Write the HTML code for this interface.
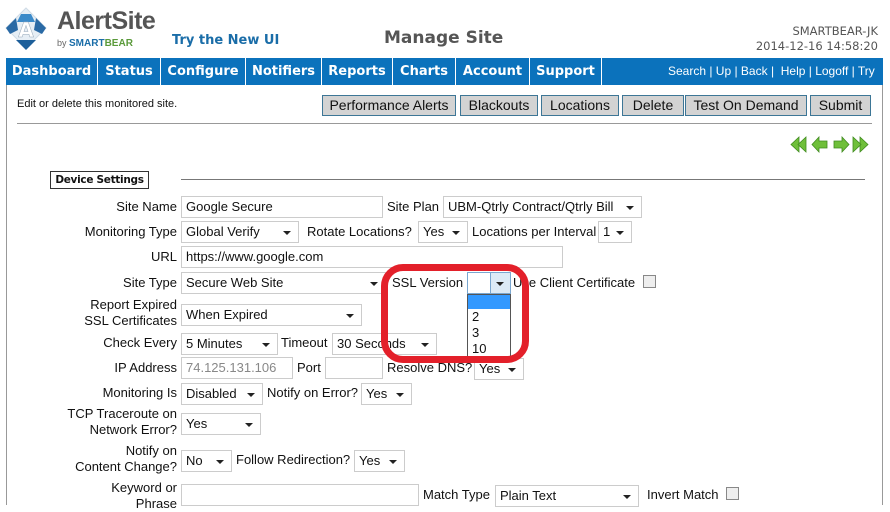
<!DOCTYPE html>
<html><head><meta charset="utf-8"><style>
*{margin:0;padding:0;box-sizing:border-box}
body{width:890px;height:499px;overflow:hidden;background:#fff;font-family:"Liberation Sans",Arial,sans-serif;position:relative;color:#111}
.a{position:absolute;white-space:nowrap}
.t{font-size:13px}
.r{text-align:right}
.in{position:absolute;border:1px solid #ccc;background:#fff;font-size:13px;padding:2px 4px;line-height:16px;height:22px;white-space:nowrap}
.sel{position:absolute;border:1px solid #ccc;background:#fff;font-size:13px;padding:1px 4px;line-height:18px;height:22px;white-space:nowrap}
.sel:after{content:"";position:absolute;right:7px;top:9px;border-left:4px solid transparent;border-right:4px solid transparent;border-top:4px solid #222}
.nav{position:absolute;top:58px;height:27px;background:#0b72bc;color:#fff;font-family:"DejaVu Sans",Verdana,sans-serif;font-weight:bold;font-size:13px;line-height:27px;text-align:center;border-right:1px solid #fff}
.btn{position:absolute;top:95px;height:21px;background:#d3d3d3;border:1px solid #3d7696;font-size:14px;line-height:19px;text-align:center;color:#111}
</style></head><body>
<svg class="a" style="left:4px;top:6px" width="44" height="46" viewBox="0 0 44 46">
<path d="M22 2 L42 22 L22 42 L2 22 Z" fill="#e6eef5"/>
<path d="M22 2 L42 22 L22 42 L2 22 Z" fill="none" stroke="#cfdbe6" stroke-width="1"/>
<path d="M2 22 L12 12 L14 24 L6 28 Z" fill="#2a6aa5"/>
<path d="M32 12 L42 22 L38 28 L30 24 Z" fill="#2a6aa5"/>
<path d="M12 34 L22 44 L32 34 Z" fill="#1d5f9a"/>
<path d="M17 8 L27 8 L31 16 L13 16 Z" fill="#3b8ac9"/>
<text x="22" y="31" font-family="DejaVu Sans" font-weight="bold" font-size="20" fill="#fff" text-anchor="middle" stroke="#9ab" stroke-width="0.5">A</text>
</svg>
<div class="a" style="left:57px;top:6px;font-family:'Liberation Sans',Arial,sans-serif;font-weight:bold;font-size:25px;color:#555;letter-spacing:-0.5px;line-height:30px">AlertSite</div>
<div class="a" style="left:57px;top:38px;font-size:9px;color:#666">by <b style="color:#1a6da8;font-size:10px">SMART</b><b style="color:#5a9a3a;font-size:10px">BEAR</b></div>
<div class="a" style="left:172px;top:33px;font-family:'DejaVu Sans',Verdana,sans-serif;font-weight:bold;font-size:13px;color:#1a6da8">Try the New UI</div>
<div class="a" style="left:384px;top:28px;font-family:'DejaVu Sans',Verdana,sans-serif;font-weight:bold;font-size:17px;color:#555">Manage Site</div>
<div class="a r" style="right:12px;top:24px;font-family:'DejaVu Sans',Verdana,sans-serif;font-size:11.5px;color:#555">SMARTBEAR-JK</div>
<div class="a r" style="right:12px;top:39px;font-family:'DejaVu Sans',Verdana,sans-serif;font-size:11.5px;color:#555">2014-12-16 14:58:20</div>
<div class="a" style="left:6px;top:58px;width:877px;height:27px;background:#0b72bc"></div>
<div class="nav" style="left:6px;width:92px">Dashboard</div>
<div class="nav" style="left:98px;width:63px">Status</div>
<div class="nav" style="left:161px;width:85px">Configure</div>
<div class="nav" style="left:246px;width:76px">Notifiers</div>
<div class="nav" style="left:322px;width:71px">Reports</div>
<div class="nav" style="left:393px;width:63px">Charts</div>
<div class="nav" style="left:456px;width:74px">Account</div>
<div class="nav" style="left:530px;width:72px">Support</div>
<div class="a" style="left:668px;top:64px;font-size:12px;color:#fff">Search | Up | Back |&nbsp; Help | Logoff | Try</div>
<div class="a" style="left:6px;top:85px;width:877px;height:420px;border-left:1px solid #999;border-right:1px solid #999"></div>
<div class="a" style="left:17px;top:98px;font-size:11px">Edit or delete this monitored site.</div>
<div class="btn" style="left:322px;width:134px">Performance Alerts</div>
<div class="btn" style="left:460px;width:78px">Blackouts</div>
<div class="btn" style="left:541px;width:78px">Locations</div>
<div class="btn" style="left:622px;width:62px">Delete</div>
<div class="btn" style="left:685px;width:122px">Test On Demand</div>
<div class="btn" style="left:810px;width:61px">Submit</div>
<div class="a" style="left:17px;top:123px;width:855px;height:1px;background:#999"></div>
<svg class="a" style="left:790px;top:136px" width="80" height="17" viewBox="0 0 80 17">
<g fill="#6fbf3a" stroke="#3f8a1e" stroke-width="0.8">
<path d="M1 8.5 L9 1 L9 16 Z"/><path d="M8 8.5 L16 1 L16 16 Z"/>
<path d="M22 8.5 L29 1 L29 5 L37 5 L37 12 L29 12 L29 16 Z"/>
<path d="M59 8.5 L52 1 L52 5 L44 5 L44 12 L52 12 L52 16 Z"/>
<path d="M78 8.5 L70 1 L70 16 Z"/><path d="M71 8.5 L63 1 L63 16 Z"/>
</g></svg>
<div class="a" style="left:50px;top:171px;width:99px;height:18px;border:1px solid #333;font-size:10.5px;font-weight:bold;line-height:16px;text-align:center;font-family:'DejaVu Sans',Verdana,sans-serif;letter-spacing:-0.3px">Device Settings</div>
<div class="a" style="left:181px;top:179px;width:684px;height:1px;background:#777"></div>

<div class="a t r" style="right:713px;top:199px">Site Name</div>
<div class="in" style="left:181px;top:196px;width:202px">Google Secure</div>
<div class="a t" style="left:387px;top:199px">Site Plan</div>
<div class="sel" style="left:443px;top:196px;width:199px;padding-right:20px">UBM-Qtrly Contract/Qtrly Bill</div>

<div class="a t r" style="right:713px;top:224px">Monitoring Type</div>
<div class="sel" style="left:181px;top:221px;width:118px">Global Verify</div>
<div class="a t" style="left:307px;top:224px">Rotate Locations?</div>
<div class="sel" style="left:418px;top:221px;width:50px">Yes</div>
<div class="a t" style="left:472px;top:224px">Locations per Interval</div>
<div class="sel" style="left:598px;top:221px;width:34px">1</div>

<div class="a t r" style="right:713px;top:249px">URL</div>
<div class="in" style="left:181px;top:246px;width:382px">https://www.google.com</div>

<div class="a t r" style="right:713px;top:275px">Site Type</div>
<div class="sel" style="left:181px;top:272px;width:205px">Secure Web Site</div>
<div class="a t" style="left:392px;top:275px">SSL Version</div>
<div class="a" style="left:467px;top:272px;width:44px;height:22px;border:1px solid #7aa7d0;background:#fff"></div>
<div class="a" style="left:490px;top:273px;width:20px;height:20px;background:#dceaf6;border-left:1px solid #7aa7d0"></div>
<div class="a" style="left:496px;top:282px;border-left:4px solid transparent;border-right:4px solid transparent;border-top:4px solid #222"></div>
<div class="a t" style="left:513px;top:275px">Use Client Certificate</div>
<div class="a" style="left:643px;top:275px;width:13px;height:13px;border:1px solid #888;background:#eee"></div>

<div class="a" style="left:467px;top:294px;width:44px;height:63px;border:1px solid #555;background:#fff;font-size:13px;line-height:16px">
<div style="height:14px;background:#3399ff"></div>
<div style="padding-left:4px">2</div><div style="padding-left:4px">3</div><div style="padding-left:4px">10</div></div>

<div class="a t r" style="right:713px;top:297px;line-height:16px">Report Expired<br>SSL Certificates</div>
<div class="sel" style="left:181px;top:304px;width:181px">When Expired</div>

<div class="a t r" style="right:713px;top:335px">Check Every</div>
<div class="sel" style="left:181px;top:333px;width:97px">5 Minutes</div>
<div class="a t" style="left:281px;top:335px">Timeout</div>
<div class="sel" style="left:332px;top:333px;width:105px">30 Seconds</div>

<div class="a t r" style="right:713px;top:360px">IP Address</div>
<div class="in" style="left:181px;top:357px;width:112px;color:#888">74.125.131.106</div>
<div class="a t" style="left:297px;top:360px">Port</div>
<div class="in" style="left:325px;top:357px;width:58px"></div>
<div class="a t" style="left:387px;top:360px">Resolve DNS?</div>
<div class="sel" style="left:474px;top:358px;width:50px">Yes</div>

<div class="a t r" style="right:713px;top:385px">Monitoring Is</div>
<div class="sel" style="left:181px;top:383px;width:82px">Disabled</div>
<div class="a t" style="left:267px;top:385px">Notify on Error?</div>
<div class="sel" style="left:361px;top:383px;width:51px">Yes</div>

<div class="a t r" style="right:713px;top:406px;line-height:16px">TCP Traceroute on<br>Network Error?</div>
<div class="sel" style="left:181px;top:413px;width:80px">Yes</div>

<div class="a t r" style="right:713px;top:443px;line-height:16px">Notify on<br>Content Change?</div>
<div class="sel" style="left:181px;top:450px;width:51px">No</div>
<div class="a t" style="left:236px;top:452px">Follow Redirection?</div>
<div class="sel" style="left:354px;top:450px;width:51px">Yes</div>

<div class="a t r" style="right:713px;top:480px;line-height:16px">Keyword or<br>Phrase</div>
<div class="in" style="left:181px;top:484px;width:238px"></div>
<div class="a t" style="left:423px;top:487px">Match Type</div>
<div class="sel" style="left:495px;top:485px;width:144px">Plain Text</div>
<div class="a t" style="left:647px;top:487px">Invert Match</div>
<div class="a" style="left:726px;top:487px;width:13px;height:13px;border:1px solid #888;background:#eee"></div>

<div class="a" style="left:381px;top:264px;width:148px;height:99px;border:7px solid #e3202a;border-radius:22px"></div>
</body></html>
